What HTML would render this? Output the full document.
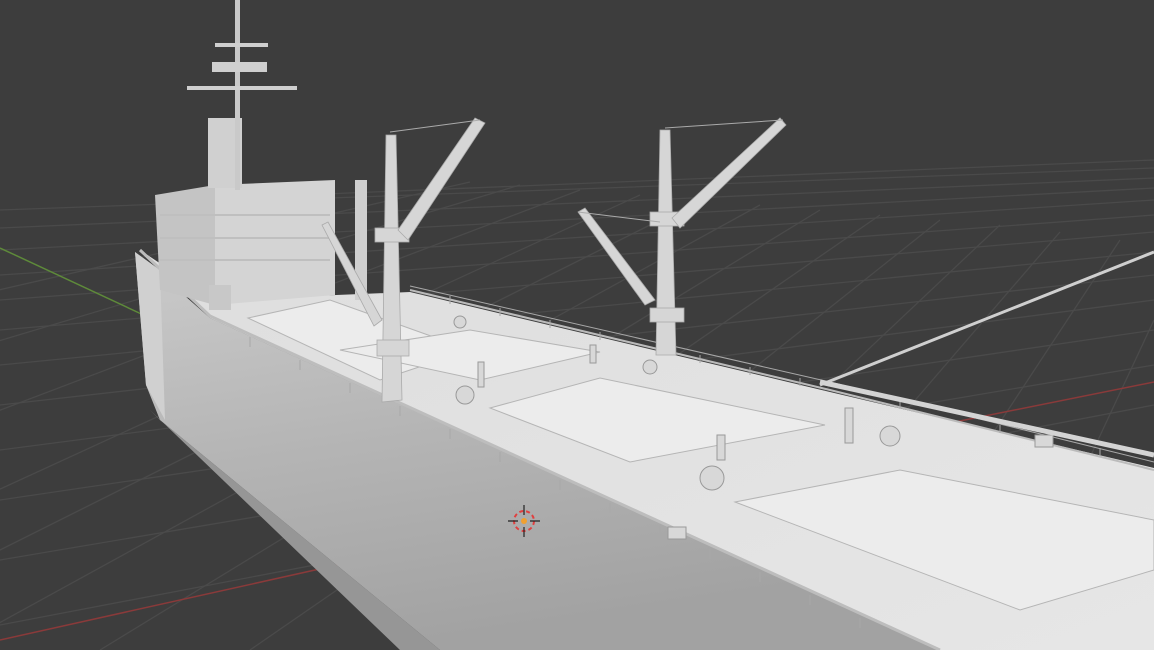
<!DOCTYPE html>
<html><head><meta charset="utf-8"><style>
html,body{margin:0;padding:0;background:#3d3d3d;overflow:hidden}
svg{display:block}
</style></head><body>
<svg width="1154" height="650" viewBox="0 0 1154 650" xmlns="http://www.w3.org/2000/svg">
<defs>
<linearGradient id="side" x1="0" y1="0" x2="0.3" y2="1">
<stop offset="0" stop-color="#cbcbcb"/><stop offset="0.5" stop-color="#b5b5b5"/><stop offset="1" stop-color="#a2a2a2"/></linearGradient>
<linearGradient id="deck" x1="0" y1="0" x2="1" y2="1">
<stop offset="0" stop-color="#dedede"/><stop offset="1" stop-color="#e6e6e6"/></linearGradient>
</defs>
<rect width="1154" height="650" fill="#3d3d3d"/>
<g stroke="#4a4a4a" stroke-width="1.3" fill="none">
<path d="M0 275 L1154 200 M0 300 L1154 215 M0 330 L1154 232 M0 365 L1154 252 M0 405 L1154 275 M0 450 L1154 300 M0 500 L1154 330 M0 560 L1154 365 M0 625 L1154 405 M0 250 L1154 188 M0 228 L1154 178 M0 210 L1154 168 M300 195 L1154 160"/>
<path d="M-200 650 L700 200 M-50 650 L760 205 M100 650 L820 210 M250 650 L880 215 M400 650 L940 220 M550 650 L1000 225 M700 650 L1060 232 M850 650 L1120 240 M1000 650 L1154 320 M-350 650 L640 195 M-500 600 L580 190 M-600 520 L520 185 M-700 450 L470 182"/>
</g>
<path d="M0 248 L150 318" stroke="#5e8a3a" stroke-width="1.5"/>
<path d="M0 640 L360 560" stroke="#8a3a3a" stroke-width="1.5"/>
<path d="M940 425 L1154 382" stroke="#8a3a3a" stroke-width="1.5"/>
<polygon points="135,252 210,318 940,650 440,650 160,420 146,385" fill="url(#side)"/>
<polygon points="135,252 160,270 165,420 146,385" fill="#d0d0d0"/>
<polygon points="160,420 440,650 400,650 150,410" fill="#969696"/>
<polygon points="140,250 215,300 410,292 830,392 1154,468 1154,650 940,650 210,318" fill="url(#deck)"/>
<polyline points="140,250 210,316 940,650" stroke="#bdbdbd" stroke-width="3" fill="none"/>
<polyline points="410,290 830,390 1154,470" stroke="#bbb" stroke-width="2" fill="none"/>
<g stroke="#a8a8a8" stroke-width="1" fill="none">
<polyline points="410,286 830,382 1154,462"/>
<path d="M450 296 v8 M500 308 v8 M550 320 v8 M600 332 v8 M700 355 v8 M750 367 v8 M800 378 v8 M900 400 v8 M1000 425 v8 M1100 448 v8"/>
<path d="M560 480 v10 M610 503 v10 M660 526 v10 M710 549 v10 M760 572 v10 M810 595 v10 M860 618 v10 M500 452 v10 M450 429 v10 M400 406 v10 M350 383 v10 M300 360 v10 M250 337 v10"/>
</g>
<g fill="#ececec" stroke="#b5b5b5">
<polygon points="248,318 330,300 470,350 380,380"/>
<polygon points="340,350 470,330 600,352 480,380"/>
<polygon points="490,408 600,378 825,425 630,462"/>
<polygon points="735,502 900,470 1154,520 1154,570 1020,610"/>
</g>
<polygon points="215,185 335,180 335,295 215,305" fill="#d4d4d4"/>
<polygon points="155,195 215,185 215,305 160,290" fill="#c4c4c4"/>
<rect x="208" y="118" width="34" height="70" fill="#d0d0d0"/>
<rect x="209" y="285" width="22" height="25" fill="#c8c8c8"/>
<g stroke="#bfbfbf" stroke-width="2"><path d="M160 215 H330 M160 238 H330 M160 260 H330"/></g>
<rect x="235" y="0" width="5" height="190" fill="#c9c9c9"/>
<rect x="212" y="62" width="55" height="10" fill="#cfcfcf"/>
<path d="M187 88 H297 M215 45 H268" stroke="#cfcfcf" stroke-width="4"/>
<rect x="355" y="180" width="12" height="120" fill="#cfcfcf"/>
<g fill="#d6d6d6" stroke="#aaa" stroke-width="0.8">
<polygon points="386,135 396,135 402,400 382,402"/>
<rect x="375" y="228" width="34" height="14"/>
<rect x="377" y="340" width="32" height="16"/>
<polygon points="660,130 670,130 676,355 656,355"/>
<rect x="650" y="212" width="34" height="14"/>
<rect x="650" y="308" width="34" height="14"/>
<polygon points="398,230 475,118 485,123 408,240"/>
<polygon points="672,218 780,118 786,125 680,228"/>
<polygon points="578,212 585,208 655,300 645,305"/>
<polygon points="322,225 328,222 382,320 374,326"/>
</g>
<g stroke="#aaa" stroke-width="1"><path d="M390 132 L480 120 M665 128 L783 120 M578 212 L660 222"/></g>
<g fill="#d8d8d8" stroke="#999">
<circle cx="465" cy="395" r="9"/><circle cx="712" cy="478" r="12"/><circle cx="890" cy="436" r="10"/><circle cx="650" cy="367" r="7"/><circle cx="460" cy="322" r="6"/>
<rect x="717" y="435" width="8" height="25"/><rect x="845" y="408" width="8" height="35"/><rect x="478" y="362" width="6" height="25"/><rect x="590" y="345" width="6" height="18"/>
<rect x="668" y="527" width="18" height="12"/><rect x="1035" y="435" width="18" height="12"/>
</g>
<path d="M820 385 L1154 252" stroke="#cfcfcf" stroke-width="3"/>
<path d="M820 382 L1154 455" stroke="#d4d4d4" stroke-width="5"/>
<g transform="translate(524,521)">
<circle r="10" fill="none" stroke="#e04040" stroke-width="2" stroke-dasharray="4 3"/>
<path d="M-16 0 H-6 M6 0 H16 M0 -16 V-6 M0 6 V16" stroke="#222" stroke-width="1.2"/>
<circle r="3" fill="#f0a030"/>
</g>
</svg>
</body></html>
